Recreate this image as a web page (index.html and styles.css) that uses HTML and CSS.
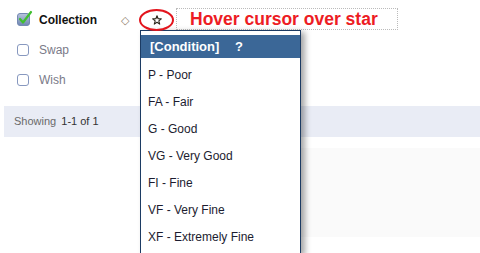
FILE: index.html
```html
<!DOCTYPE html>
<html lang="en">
<head>
    <meta charset="UTF-8">
    <title>Collection filter</title>
    <link rel="stylesheet" href="styles.css">
</head>
<body>
    <div class="page">
        <div class="filters">
            <div class="filter">
                <span class="box checked">
                    <svg width="17" height="17" viewBox="0 0 17 17">
                        <defs>
                            <linearGradient id="boxFill" x1="0" y1="0" x2="0" y2="1">
                                <stop offset="0" stop-color="#b9c5dd"/>
                                <stop offset="1" stop-color="#6f86b2"/>
                            </linearGradient>
                        </defs>
                        <rect x="0.5" y="3.5" width="12" height="12" rx="2.5" fill="url(#boxFill)" stroke="#7489b3"/>
                        <polyline points="3,9 6,12.5 14,2" fill="none" stroke="#3fbf2f" stroke-width="2.2" stroke-linecap="round" stroke-linejoin="round"/>
                    </svg>
                </span>
                <span class="label strong">Collection</span>
                <span class="diamond">&#9671;</span>
                <span class="star">
                    <svg width="10" height="10" viewBox="0 0 10 10">
                        <polygon points="5,0.8 6.1,3.8 9.3,3.9 6.8,5.9 7.7,9.1 5,7.2 2.3,9.1 3.2,5.9 0.7,3.9 3.9,3.8" fill="#fff" stroke="#2a2418" stroke-width="1.1" stroke-linejoin="round"/>
                    </svg>
                </span>
                <span class="note">Hover cursor over star</span>
            </div>
            <div class="filter">
                <span class="box"></span>
                <span class="label">Swap</span>
            </div>
            <div class="filter">
                <span class="box"></span>
                <span class="label">Wish</span>
            </div>
        </div>

        <div class="summary">Showing <span class="count">1-1 of 1</span></div>
        <div class="panel"></div>

        <span class="ring"></span>

        <div class="menu">
            <div class="menu-head">[Condition] <span class="help">?</span></div>
            <ul class="menu-list">
                <li>P - Poor</li>
                <li>FA - Fair</li>
                <li>G - Good</li>
                <li>VG - Very Good</li>
                <li>FI - Fine</li>
                <li>VF - Very Fine</li>
                <li>XF - Extremely Fine</li>
            </ul>
        </div>
    </div>
</body>
</html>
```

FILE: styles.css
```css
html, body {
    margin: 0;
    overflow: hidden;
}
body {
    font-family: "Liberation Sans", Arial, sans-serif;
    background: #fff;
    height: 253px;
}
.page {
    position: relative;
    height: 253px;
    overflow: hidden;
}
.filters {
    padding: 5px 0 0 17px;
}
.filter {
    display: flex;
    align-items: center;
    height: 30px;
}
.box {
    width: 12px;
    height: 12px;
    border: 1px solid #8798bf;
    border-radius: 3px;
    background: #fff;
    box-sizing: border-box;
    margin-right: 10px;
    flex: none;
}
.box.checked {
    border: none;
    background: none;
    position: relative;
}
.box.checked svg {
    position: absolute;
    left: 0;
    top: -4px;
}
.label {
    width: 70px;
    font-size: 12px;
    color: #7a7a88;
}
.label.strong {
    font-weight: bold;
    color: #111;
}
.diamond {
    width: 12px;
    margin-left: 10px;
    text-align: center;
    font-size: 11px;
    color: #8f7e6c;
}
.star {
    display: flex;
    justify-content: center;
    width: 12px;
    margin-left: 20px;
}
.note {
    margin: -3px 0 0 13px;
    width: 222px;
    height: 22px;
    box-sizing: border-box;
    border: 1px dotted #bbb;
    padding-left: 13px;
    font-size: 17.5px;
    line-height: 20px;
    font-weight: bold;
    color: #ed1c24;
}
.summary {
    margin: 11px 0 0 4px;
    height: 31px;
    line-height: 31px;
    padding-left: 10px;
    background: #e9ecf5;
    font-size: 11px;
    color: #6a6a6a;
}
.count {
    color: #333;
    margin-left: 2px;
}
.panel {
    margin: 11px 0 0 160px;
    height: 89px;
    background: #fafafa;
}
.ring {
    position: absolute;
    left: 139px;
    top: 9px;
    width: 35px;
    height: 22px;
    box-sizing: border-box;
    border: 2.5px solid #e3151d;
    border-radius: 50%;
    z-index: 3;
}
.menu {
    position: absolute;
    left: 140px;
    top: 30px;
    width: 159px;
    height: 219px;
    padding-top: 4px;
    background: #fff;
    border: 1px solid #1c3b63;
    border-bottom: none;
    box-shadow: 4px 2px 6px rgba(0, 0, 0, 0.35);
    overflow: hidden;
    z-index: 2;
}
.menu-head {
    height: 23px;
    line-height: 23px;
    padding-left: 9px;
    background: #3b6797;
    color: #fff;
    font-size: 13px;
    font-weight: bold;
}
.help {
    margin-left: 12px;
}
.menu-list {
    list-style: none;
    margin: 0;
    padding: 4px 0 0;
}
.menu-list li {
    height: 27px;
    line-height: 27px;
    padding-left: 7px;
    font-size: 12px;
    color: #1c1c30;
}
```
